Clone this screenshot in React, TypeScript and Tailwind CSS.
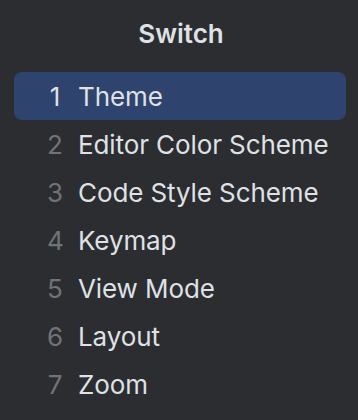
const items = [
  'Theme',
  'Editor Color Scheme',
  'Code Style Scheme',
  'Keymap',
  'View Mode',
  'Layout',
  'Zoom',
];

export default function App() {
  return (
    <div className="h-[420px] w-[358px] bg-[#2b2d30] font-['Inter',sans-serif] text-[#dfe1e5] overflow-hidden">
      <div className="flex h-[72px] items-center justify-center pb-[5px] pl-[4px]">
        <h1 className="text-[26px] font-semibold">Switch</h1>
      </div>
      <ul className="flex flex-col pl-[14px] pr-[12px]">
        {items.map((label, i) => (
          <li
            key={label}
            className={
              i === 0
                ? 'flex h-[48px] items-center gap-[15px] rounded-[8px] bg-[#2e436e] pl-[33px]'
                : 'flex h-[48px] items-center gap-[15px] rounded-[8px] pl-[33px]'
            }
          >
            <span
              className={
                i === 0
                  ? 'w-[16px] text-center text-[26px] text-[#dfe1e5]'
                  : 'w-[16px] text-center text-[26px] text-[#6f737a]'
              }
            >
              {i + 1}
            </span>
            <span className="text-[26px] tracking-[-0.1px]">{label}</span>
          </li>
        ))}
      </ul>
    </div>
  );
}
